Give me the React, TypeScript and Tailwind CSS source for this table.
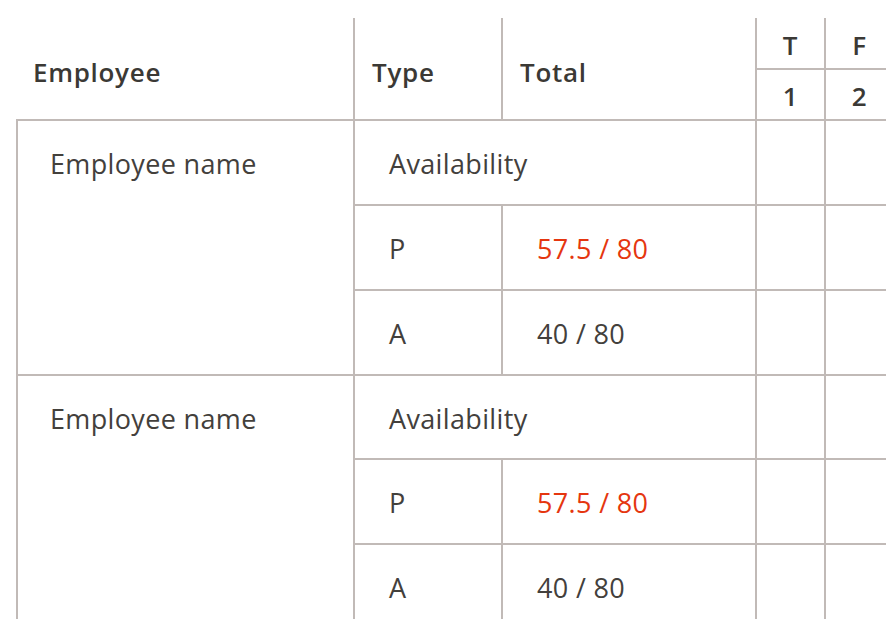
import React from "react";

const line = "border-[#c1bab7]";
const head = "text-[26px] font-semibold tracking-[0.7px] text-[#3b3935]";
const txt = "text-[27px] tracking-[0.35px] text-[#43403c] pt-1";
const cell = `border-l-2 border-t-2 ${line} flex items-center`;

type Rows = { a: string; b: string; c: string; group: string };

function Group({ rows }: { rows: Rows }) {
  return (
    <>
      <div className={`col-start-1 row-span-3 border-l-2 border-t-2 ${line} ${rows.group}`}>
        <div className={`h-[83px] flex items-center pl-[32px] ${txt}`}>Employee name</div>
      </div>
      <div className={`col-start-2 col-span-2 pl-[34px] ${cell} ${txt} ${rows.a}`}>Availability</div>
      <div className={`col-start-4 ${cell} ${rows.a}`} />
      <div className={`col-start-5 ${cell} ${rows.a}`} />

      <div className={`col-start-2 pl-[34px] ${cell} ${txt} ${rows.b}`}>P</div>
      <div className={`col-start-3 pl-[34px] ${cell} text-[27px] tracking-[0.35px] pt-1 text-[#e5360f] ${rows.b}`}>
        57.5 / 80
      </div>
      <div className={`col-start-4 ${cell} ${rows.b}`} />
      <div className={`col-start-5 ${cell} ${rows.b}`} />

      <div className={`col-start-2 pl-[34px] ${cell} ${txt} ${rows.c}`}>A</div>
      <div className={`col-start-3 pl-[34px] ${cell} ${txt} ${rows.c}`}>40 / 80</div>
      <div className={`col-start-4 ${cell} ${rows.c}`} />
      <div className={`col-start-5 ${cell} ${rows.c}`} />
    </>
  );
}

export default function App() {
  return (
    <div className="w-[886px] h-[619px] overflow-hidden bg-white font-['Open_Sans','Noto_Sans',sans-serif]">
      <div className="pl-4 pt-[18px]">
        <div className="grid grid-cols-[337px_148px_254px_69px_69px] grid-rows-[50px_51px_85px_85px_85px_84px_85px_85px] w-[977px]">
          <div className={`col-start-1 row-start-1 row-span-2 flex items-center pl-[17px] pt-2 ${head}`}>Employee</div>
          <div className={`col-start-2 row-start-1 row-span-2 border-l-2 ${line} flex items-center pl-[17px] pt-2 ${head}`}>
            Type
          </div>
          <div className={`col-start-3 row-start-1 row-span-2 border-l-2 ${line} flex items-center pl-[17px] pt-2 ${head}`}>
            Total
          </div>
          <div className={`col-start-4 row-start-1 border-l-2 ${line} flex items-center justify-center pt-1 ${head}`}>T</div>
          <div className={`col-start-5 row-start-1 border-l-2 ${line} flex items-center justify-center pt-1 ${head}`}>F</div>
          <div className={`col-start-4 row-start-2 border-l-2 border-t-2 ${line} flex items-center justify-center pt-1 ${head}`}>
            1
          </div>
          <div className={`col-start-5 row-start-2 border-l-2 border-t-2 ${line} flex items-center justify-center pt-1 ${head}`}>
            2
          </div>

          <Group rows={{ group: "row-start-3", a: "row-start-3", b: "row-start-4", c: "row-start-5" }} />
          <Group rows={{ group: "row-start-6", a: "row-start-6", b: "row-start-7", c: "row-start-8" }} />
        </div>
      </div>
    </div>
  );
}
